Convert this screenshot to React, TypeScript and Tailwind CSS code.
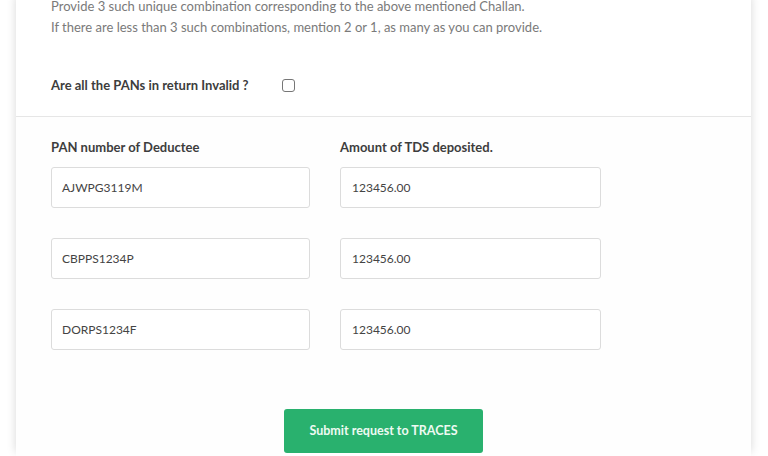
import React from 'react';

const rows = [
  { pan: 'AJWPG3119M', amount: '123456.00' },
  { pan: 'CBPPS1234P', amount: '123456.00' },
  { pan: 'DORPS1234F', amount: '123456.00' },
];

export default function App() {
  return (
    <div
      className="h-[456px] w-full overflow-hidden bg-white pl-4 pr-[17px]"
      style={{ fontFamily: 'Lato, "Open Sans", sans-serif' }}
    >
      <div className="h-full bg-white shadow-[0_0_9px_rgba(0,0,0,0.16)]">
        {/* Instructions and invalid check */}
        <div className="border-b border-[#e6e6e6] pl-[35px] pb-[20px]">
          <p className="-mt-[4px] text-[13px] leading-[21px] text-[#7a7a7a]">
            Provide 3 such unique combination corresponding to the above mentioned Challan.
            <br />
            If there are less than 3 such combinations, mention 2 or 1, as many as you can provide.
          </p>
          <div className="mt-[37px] flex items-center">
            <span className="text-[13px] font-bold leading-[21px] text-[#3d3d3d]">
              Are all the PANs in return Invalid ?
            </span>
            <span className="ml-[33px] h-[13px] w-[13px] rounded-[3px] border border-[#767676] bg-white" />
          </div>
        </div>

        {/* PAN / amount entries */}
        <div className="h-full bg-[#fefefe] pl-[35px] pt-[20px]">
          <div className="flex gap-[30px]">
            <div className="w-[259px] text-[13px] font-bold leading-[21px] text-[#3d3d3d]">
              PAN number of Deductee
            </div>
            <div className="w-[261px] text-[13px] font-bold leading-[21px] text-[#3d3d3d]">
              Amount of TDS deposited.
            </div>
          </div>
          <div className="mt-[9px] flex flex-col gap-[30px]">
            {rows.map((r) => (
              <div key={r.pan} className="flex gap-[30px]">
                <div className="flex h-[41px] w-[259px] items-center rounded-[3px] border border-[#dcdcdc] bg-white px-[10px] text-[12px] text-[#444]">
                  {r.pan}
                </div>
                <div className="flex h-[41px] w-[261px] items-center rounded-[3px] border border-[#dcdcdc] bg-white px-[11px] text-[12px] text-[#444]">
                  {r.amount}
                </div>
              </div>
            ))}
          </div>
          <div className="mt-[59px] flex pl-[233px]">
            <button className="h-[44px] w-[199px] rounded-[3px] bg-[#29b16e] text-[12.5px] font-bold text-[#eefaf2]">
              Submit request to TRACES
            </button>
          </div>
        </div>
      </div>
    </div>
  );
}
